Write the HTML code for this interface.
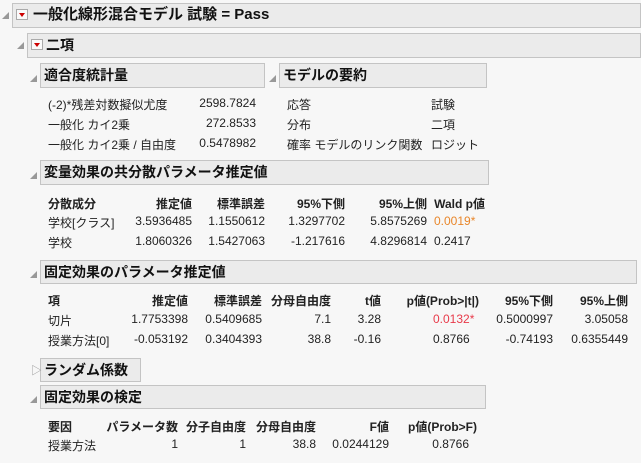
<!DOCTYPE html>
<html><head><meta charset="utf-8"><style>
body{margin:0;width:641px;height:463px;background:#f7f7f7;font-family:"Liberation Sans","Noto Sans CJK JP",sans-serif;font-size:12px;color:#222;position:relative;overflow:hidden}
.a{position:absolute;white-space:nowrap}
.bar{position:absolute;background:#ebebeb;border:1px solid #c4c4c4;box-sizing:border-box;font-weight:bold;font-size:14px;color:#111;padding-left:3px;line-height:22px}
.tri{position:absolute;width:0;height:0;border-left:7px solid transparent;border-bottom:7px solid #999}
.btn{position:absolute;width:12px;height:11px;border:1px solid #aaa;background:#fafafa;box-sizing:border-box}
.btn:after{content:"";position:absolute;left:2px;top:3px;border-left:3px solid transparent;border-right:3px solid transparent;border-top:4px solid #c00}
.r{text-align:right}
.h{font-weight:bold}
</style></head><body>
<div class="bar" style="left:12px;top:3px;width:629px;height:25px;padding-left:20px;font-size:15px">一般化線形混合モデル 試験 = Pass</div>
<div class="tri" style="left:2px;top:12px"></div>
<div class="btn" style="left:16px;top:9px"></div>
<div class="bar" style="left:27px;top:33px;width:614px;height:25px;padding-left:18px">二項</div>
<div class="tri" style="left:17px;top:42px"></div>
<div class="btn" style="left:31px;top:39px"></div>

<div class="bar" style="left:40px;top:63px;width:225px;height:25px">適合度統計量</div>
<div class="tri" style="left:30px;top:75px"></div>
<div class="bar" style="left:279px;top:63px;width:208px;height:25px">モデルの要約</div>
<div class="tri" style="left:269px;top:75px"></div>

<div class="a" style="left:48px;top:96px">(-2)*残差対数擬似尤度</div><div class="a r" style="left:180px;width:76px;top:96px">2598.7824</div>
<div class="a" style="left:48px;top:116px">一般化 カイ2乗</div><div class="a r" style="left:180px;width:76px;top:116px">272.8533</div>
<div class="a" style="left:48px;top:136px">一般化 カイ2乗 / 自由度</div><div class="a r" style="left:180px;width:76px;top:136px">0.5478982</div>
<div class="a" style="left:287px;top:96px">応答</div><div class="a" style="left:431px;top:96px">試験</div>
<div class="a" style="left:287px;top:116px">分布</div><div class="a" style="left:431px;top:116px">二項</div>
<div class="a" style="left:287px;top:136px">確率 モデルのリンク関数</div><div class="a" style="left:431px;top:136px">ロジット</div>

<div class="bar" style="left:40px;top:160px;width:449px;height:25px">変量効果の共分散パラメータ推定値</div>
<div class="tri" style="left:30px;top:172px"></div>
<div class="a h" style="left:48px;top:195px">分散成分</div>
<div class="a h r" style="left:120px;width:72px;top:195px">推定値</div>
<div class="a h r" style="left:190px;width:75px;top:195px">標準誤差</div>
<div class="a h r" style="left:270px;width:75px;top:195px">95%下側</div>
<div class="a h r" style="left:350px;width:77px;top:195px">95%上側</div>
<div class="a h r" style="left:420px;width:65px;top:195px">Wald p値</div>
<div class="a" style="left:48px;top:214px">学校[クラス]</div>
<div class="a r" style="left:120px;width:72px;top:214px">3.5936485</div>
<div class="a r" style="left:190px;width:75px;top:214px">1.1550612</div>
<div class="a r" style="left:270px;width:75px;top:214px">1.3297702</div>
<div class="a r" style="left:350px;width:77px;top:214px">5.8575269</div>
<div class="a" style="left:434px;top:214px;color:#e8862a">0.0019*</div>
<div class="a" style="left:48px;top:234px">学校</div>
<div class="a r" style="left:120px;width:72px;top:234px">1.8060326</div>
<div class="a r" style="left:190px;width:75px;top:234px">1.5427063</div>
<div class="a r" style="left:270px;width:75px;top:234px">-1.217616</div>
<div class="a r" style="left:350px;width:77px;top:234px">4.8296814</div>
<div class="a" style="left:434px;top:234px">0.2417</div>

<div class="bar" style="left:40px;top:260px;width:597px;height:24px">固定効果のパラメータ推定値</div>
<div class="tri" style="left:30px;top:271px"></div>
<div class="a h" style="left:48px;top:292px">項</div>
<div class="a h r" style="left:120px;width:68px;top:292px">推定値</div>
<div class="a h r" style="left:190px;width:72px;top:292px">標準誤差</div>
<div class="a h r" style="left:260px;width:71px;top:292px">分母自由度</div>
<div class="a h r" style="left:340px;width:41px;top:292px">t値</div>
<div class="a h r" style="left:380px;width:99px;top:292px">p値(Prob&gt;|t|)</div>
<div class="a h r" style="left:480px;width:73px;top:292px">95%下側</div>
<div class="a h r" style="left:560px;width:68px;top:292px">95%上側</div>
<div class="a" style="left:48px;top:312px">切片</div>
<div class="a r" style="left:120px;width:68px;top:312px">1.7753398</div>
<div class="a r" style="left:190px;width:72px;top:312px">0.5409685</div>
<div class="a r" style="left:260px;width:71px;top:312px">7.1</div>
<div class="a r" style="left:340px;width:41px;top:312px">3.28</div>
<div class="a" style="left:433px;top:312px;color:#e83a4a">0.0132*</div>
<div class="a r" style="left:480px;width:73px;top:312px">0.5000997</div>
<div class="a r" style="left:560px;width:68px;top:312px">3.05058</div>
<div class="a" style="left:48px;top:332px">授業方法[0]</div>
<div class="a r" style="left:120px;width:68px;top:332px">-0.053192</div>
<div class="a r" style="left:190px;width:72px;top:332px">0.3404393</div>
<div class="a r" style="left:260px;width:71px;top:332px">38.8</div>
<div class="a r" style="left:340px;width:41px;top:332px">-0.16</div>
<div class="a" style="left:433px;top:332px">0.8766</div>
<div class="a r" style="left:480px;width:73px;top:332px">-0.74193</div>
<div class="a r" style="left:560px;width:68px;top:332px">0.6355449</div>

<div class="bar" style="left:40px;top:358px;width:101px;height:24px">ランダム係数</div>
<div class="a" style="left:31px;top:362px;color:#999;font-size:11px">▷</div>
<div class="bar" style="left:40px;top:385px;width:446px;height:24px">固定効果の検定</div>
<div class="tri" style="left:30px;top:396px"></div>
<div class="a h" style="left:48px;top:418px">要因</div>
<div class="a h r" style="left:100px;width:78px;top:418px">パラメータ数</div>
<div class="a h r" style="left:180px;width:66px;top:418px">分子自由度</div>
<div class="a h r" style="left:250px;width:66px;top:418px">分母自由度</div>
<div class="a h r" style="left:320px;width:69px;top:418px">F値</div>
<div class="a h r" style="left:390px;width:87px;top:418px">p値(Prob&gt;F)</div>
<div class="a" style="left:48px;top:437px">授業方法</div>
<div class="a r" style="left:100px;width:78px;top:437px">1</div>
<div class="a r" style="left:180px;width:66px;top:437px">1</div>
<div class="a r" style="left:250px;width:66px;top:437px">38.8</div>
<div class="a r" style="left:320px;width:69px;top:437px">0.0244129</div>
<div class="a r" style="left:390px;width:79px;top:437px">0.8766</div>
</body></html>
